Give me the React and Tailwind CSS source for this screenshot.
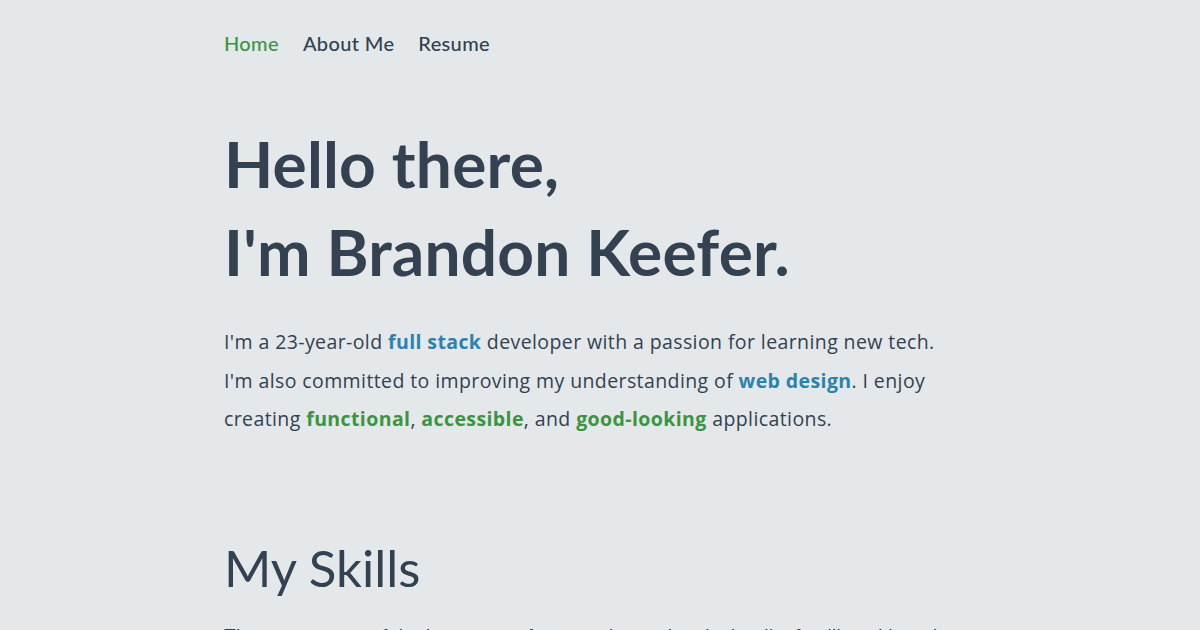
export default function App() {
  return (
    <div className="min-h-screen bg-[#e4e8eb] font-['Lato',sans-serif] text-[#334150]">
      <div className="mx-auto w-[752px]">
        <nav className="flex gap-6 pt-[29px] text-[20px] font-medium leading-7 tracking-[0.35px]">
          <a className="text-[#3d9343]">Home</a>
          <a>About Me</a>
          <a>Resume</a>
        </nav>
        <section className="mt-[63px]">
          <h1 className="text-[64px] font-bold leading-[88px] tracking-[0.2px]">
            Hello there,
            <br />
            I'm Brandon Keefer.
          </h1>
          <p className="mt-[27px] font-['Open_Sans',sans-serif] text-[19.5px] leading-[38.5px] tracking-[0.4px]">
            I'm a 23-year-old <span className="font-bold text-[#2b83ad]">full stack</span> developer with a passion for
            learning new tech.
            <br />
            I'm also committed to improving my understanding of{' '}
            <span className="font-bold text-[#2b83ad]">web design</span>. I enjoy
            <br />
            creating <span className="font-bold text-[#3d9343]">functional</span>,{' '}
            <span className="font-bold text-[#3d9343]">accessible</span>, and{' '}
            <span className="font-bold text-[#3d9343]">good-looking</span> applications.
          </p>
        </section>
        <section className="mt-[98px]">
          <h2 className="text-[51px] font-normal leading-[62px]">My Skills</h2>
          <p className="mt-[21px] font-['Liberation_Sans',sans-serif] text-[19px] leading-8 tracking-[0.3px]">
            These are some of the languages, frameworks, and tools that I'm familiar with and use regularly.
          </p>
        </section>
      </div>
    </div>
  )
}
